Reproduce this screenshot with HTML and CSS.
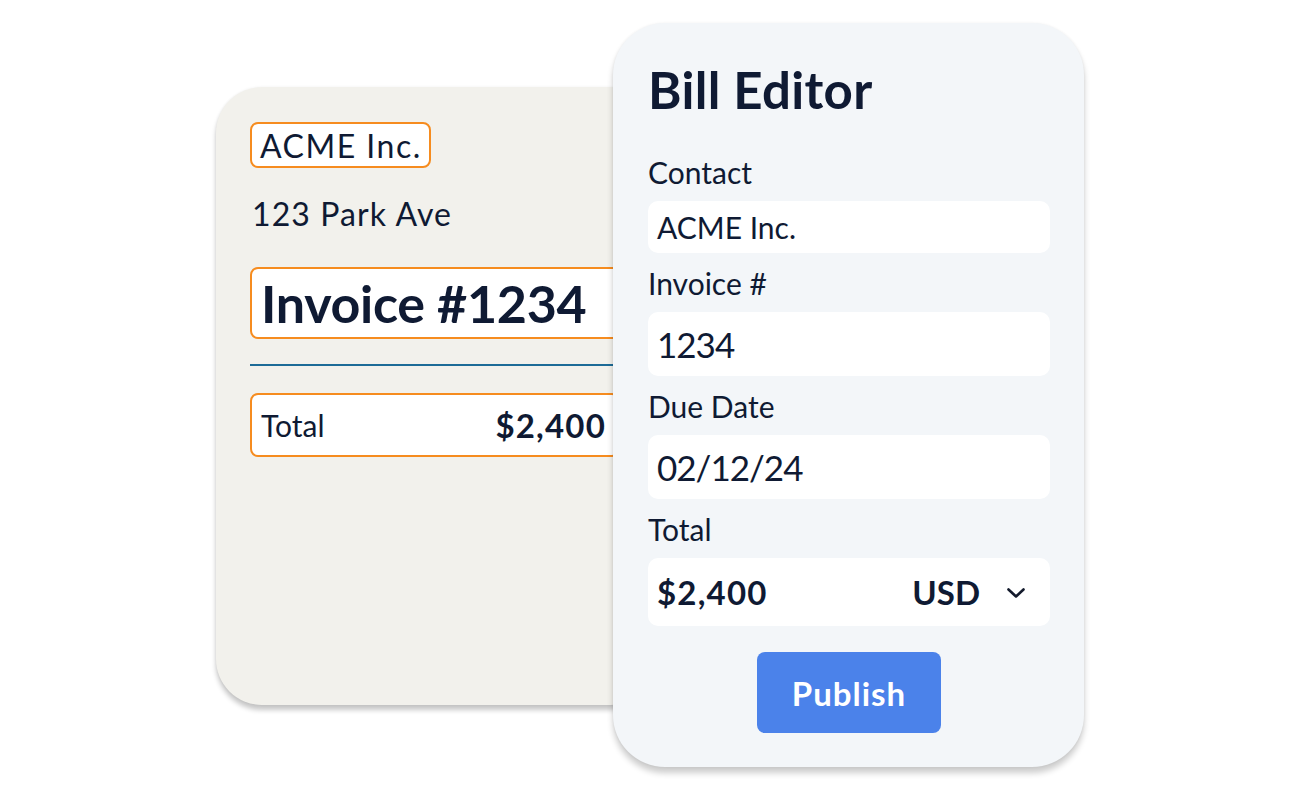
FILE: index.html
```html
<!DOCTYPE html>
<html>
<head>
<meta charset="utf-8">
<link rel="stylesheet" href="styles.css">
</head>
<body>
<div class="stage">
  <div class="doc-card">
    <div class="hl hl-name">ACME Inc.</div>
    <div class="address">123 Park Ave</div>
    <div class="hl hl-invoice">Invoice #1234</div>
    <div class="rule"></div>
    <div class="hl hl-total"><span class="t-label">Total</span><span class="t-value">$2,400</span></div>
  </div>
  <div class="editor-card">
    <h1 class="title">Bill Editor</h1>
    <div class="label first">Contact</div>
    <div class="field f-contact">ACME Inc.</div>
    <div class="label">Invoice #</div>
    <div class="field f-big">1234</div>
    <div class="label">Due Date</div>
    <div class="field f-big">02/12/24</div>
    <div class="label">Total</div>
    <div class="field f-total">
      <span class="amount">$2,400</span>
      <span class="currency">USD
        <svg class="chev" width="20" height="12" viewBox="0 0 20 12"><path d="M2.5 2.5 L10 9.5 L17.5 2.5" fill="none" stroke="#131a2c" stroke-width="2.6" stroke-linecap="round" stroke-linejoin="round"/></svg>
      </span>
    </div>
    <div class="actions"><button class="publish">Publish</button></div>
  </div>
</div>
</body>
</html>
```

FILE: styles.css
```css
html, body {
  margin: 0;
  padding: 0;
  background: #ffffff;
}
body {
  font-family: "Lato", "Liberation Sans", sans-serif;
  color: #0f1a33;
  width: 1300px;
  height: 789px;
  overflow: hidden;
}
.stage {
  display: flex;
  align-items: flex-start;
  padding: 23px 0 0 216px;
}

/* Back document card */
.doc-card {
  width: 440px;
  height: 618px;
  margin-top: 64px;
  box-sizing: border-box;
  padding: 35px 0 0 34px;
  background: #f2f1ec;
  border-radius: 46px;
  box-shadow: 0 5px 5px rgba(0, 0, 0, 0.22), 0 0 3px rgba(0, 0, 0, 0.06);
  display: flex;
  flex-direction: column;
  align-items: flex-start;
  overflow: hidden;
}
.hl {
  box-sizing: border-box;
  border: 2px solid #f68c1f;
  border-radius: 8px;
  background: #ffffff;
  display: flex;
  align-items: center;
}
.hl-name {
  height: 46px;
  padding: 0 7px 0 8px;
  font-size: 32px;
  letter-spacing: 1.5px;
}
.address {
  margin-top: 26px;
  font-size: 32px;
  line-height: 40px;
  padding-left: 2px;
  letter-spacing: 1.1px;
}
.hl-invoice {
  margin-top: 33px;
  width: 380px;
  height: 72px;
  padding-left: 9px;
  font-size: 52px;
  font-weight: 700;
  letter-spacing: -0.3px;
}
.rule {
  margin-top: 25px;
  width: 380px;
  height: 2px;
  background: #1d6b97;
}
.hl-total {
  margin-top: 27px;
  width: 370px;
  height: 64px;
  padding: 0 12px 0 9px;
  justify-content: space-between;
  font-size: 30px;
}
.t-value {
  font-weight: 700;
  font-size: 33px;
  letter-spacing: 1.2px;
}

/* Front editor card */
.editor-card {
  position: relative;
  z-index: 1;
  margin-left: -43px;
  width: 471px;
  height: 744px;
  box-sizing: border-box;
  padding: 37px 34px 0 35px;
  background: #f3f6f9;
  border-radius: 52px;
  box-shadow: 0 6px 6px rgba(0, 0, 0, 0.2), 0 0 3px rgba(0, 0, 0, 0.06);
}
.title {
  margin: 0;
  font-size: 51px;
  line-height: 60px;
  font-weight: 700;
  letter-spacing: 0.3px;
}
.label {
  font-size: 30px;
  line-height: 36px;
  margin: 12px 0 11px;
}
.label.first {
  margin-top: 34px;
}
.field {
  box-sizing: border-box;
  background: #ffffff;
  border-radius: 10px;
  display: flex;
  align-items: center;
  padding-left: 9px;
}
.f-contact {
  height: 52px;
  font-size: 30px;
}
.f-big {
  height: 64px;
  font-size: 35px;
  letter-spacing: -1px;
}
.f-total {
  height: 68px;
  justify-content: space-between;
  padding-right: 24px;
  font-size: 33px;
  font-weight: 700;
}
.amount {
  letter-spacing: 1.2px;
}
.currency {
  display: flex;
  align-items: center;
  gap: 26px;
}
.chev {
  display: block;
  margin-top: 2px;
}
.actions {
  display: flex;
  justify-content: center;
  margin-top: 26px;
}
.publish {
  width: 184px;
  height: 81px;
  border: none;
  border-radius: 8px;
  background: #4b82ea;
  color: #ffffff;
  font-family: "Lato", "Liberation Sans", sans-serif;
  font-size: 33px;
  font-weight: 700;
  letter-spacing: 1px;
  padding: 0;
}
```
